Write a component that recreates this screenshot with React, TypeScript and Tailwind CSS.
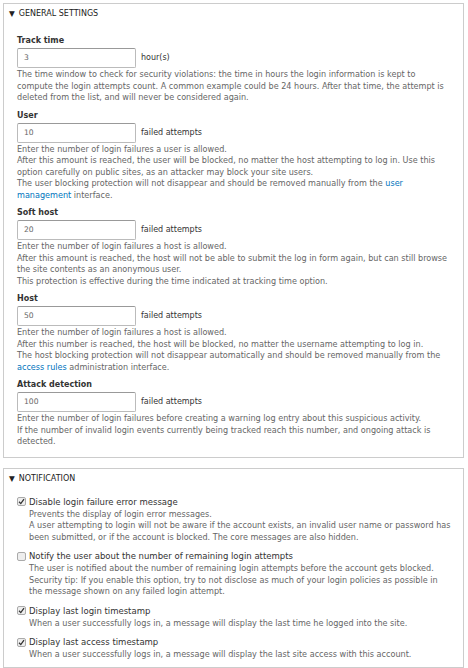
import React from 'react';

const font = { fontFamily: '"DejaVu Sans", "Liberation Sans", sans-serif' };

function Legend({ title }: { title: string }) {
  return (
    <div className="flex items-center h-[20px] pl-[5px] text-[8px] text-[#222]">
      <span className="text-[7.5px] mr-[4px]">▼</span>
      <span>{title}</span>
    </div>
  );
}

function Field({
  label,
  value,
  suffix,
  children,
}: {
  label: string;
  value: string;
  suffix: string;
  children: React.ReactNode;
}) {
  return (
    <div className="mt-[6px]">
      <div className="text-[8px] leading-[12px] font-bold text-[#333]">{label}</div>
      <div className="flex items-center mt-[1px]">
        <div className="w-[119px] h-[20px] border border-[#bbb] border-t-[#999] rounded-[2px] flex items-center pl-[6px] text-[7.6px] text-[#666]">
          {value}
        </div>
        <span className="ml-[5px] text-[8px] text-[#333]">{suffix}</span>
      </div>
      <div className="text-[8.1px] leading-[11.5px] text-[#666] mt-[1px] whitespace-nowrap">{children}</div>
    </div>
  );
}

function Checkbox({ checked }: { checked: boolean }) {
  return (
    <span className="w-[9px] h-[9px] rounded-[2px] border border-[#aaa] bg-[#eee] flex items-center justify-center shrink-0">
      {checked && (
        <svg width="7" height="7" viewBox="0 0 7 7">
          <path d="M1 3.8 L2.8 5.6 L6 1.2" stroke="#333" strokeWidth="1.3" fill="none" />
        </svg>
      )}
    </span>
  );
}

function Option({
  checked,
  label,
  children,
}: {
  checked: boolean;
  label: string;
  children: React.ReactNode;
}) {
  return (
    <div className="mt-[7px]">
      <div className="flex items-center gap-[3px] text-[8.5px] leading-[12px] text-[#333]">
        <Checkbox checked={checked} />
        <span>{label}</span>
      </div>
      <div className="pl-[12px] text-[8.1px] leading-[11.5px] text-[#666] mt-[1px] whitespace-nowrap">{children}</div>
    </div>
  );
}

const Link = ({ children }: { children: React.ReactNode }) => (
  <a href="#" className="text-[#0074bd]">{children}</a>
);

export default function App() {
  return (
    <div className="w-[468px] h-[668px] bg-white px-[3px] pt-[3px]" style={font}>
      {/* General settings */}
      <div className="w-[461px] border border-[#ccc] pb-[9px]">
        <Legend title="GENERAL SETTINGS" />
        <div className="pl-[13px] pt-[5px]">
          <Field label="Track time" value="3" suffix="hour(s)">
            The time window to check for security violations: the time in hours the login information is kept to<br />
            compute the login attempts count. A common example could be 24 hours. After that time, the attempt is<br />
            deleted from the list, and will never be considered again.
          </Field>
          <Field label="User" value="10" suffix="failed attempts">
            Enter the number of login failures a user is allowed.<br />
            After this amount is reached, the user will be blocked, no matter the host attempting to log in. Use this<br />
            option carefully on public sites, as an attacker may block your site users.<br />
            The user blocking protection will not disappear and should be removed manually from the <Link>user</Link><br />
            <Link>management</Link> interface.
          </Field>
          <Field label="Soft host" value="20" suffix="failed attempts">
            Enter the number of login failures a host is allowed.<br />
            After this amount is reached, the host will not be able to submit the log in form again, but can still browse<br />
            the site contents as an anonymous user.<br />
            This protection is effective during the time indicated at tracking time option.
          </Field>
          <Field label="Host" value="50" suffix="failed attempts">
            Enter the number of login failures a host is allowed.<br />
            After this number is reached, the host will be blocked, no matter the username attempting to log in.<br />
            The host blocking protection will not disappear automatically and should be removed manually from the<br />
            <Link>access rules</Link> administration interface.
          </Field>
          <Field label="Attack detection" value="100" suffix="failed attempts">
            Enter the number of login failures before creating a warning log entry about this suspicious activity.<br />
            If the number of invalid login events currently being tracked reach this number, and ongoing attack is<br />
            detected.
          </Field>
        </div>
      </div>

      {/* Notification */}
      <div className="w-[461px] border border-[#ccc] mt-[10px] pb-[6px]">
        <Legend title="NOTIFICATION" />
        <div className="pl-[13px]">
          <Option checked label="Disable login failure error message">
            Prevents the display of login error messages.<br />
            A user attempting to login will not be aware if the account exists, an invalid user name or password has<br />
            been submitted, or if the account is blocked. The core messages are also hidden.
          </Option>
          <Option checked={false} label="Notify the user about the number of remaining login attempts">
            The user is notified about the number of remaining login attempts before the account gets blocked.<br />
            Security tip: If you enable this option, try to not disclose as much of your login policies as possible in<br />
            the message shown on any failed login attempt.
          </Option>
          <Option checked label="Display last login timestamp">
            When a user successfully logs in, a message will display the last time he logged into the site.
          </Option>
          <Option checked label="Display last access timestamp">
            When a user successfully logs in, a message will display the last site access with this account.
          </Option>
        </div>
      </div>
    </div>
  );
}
